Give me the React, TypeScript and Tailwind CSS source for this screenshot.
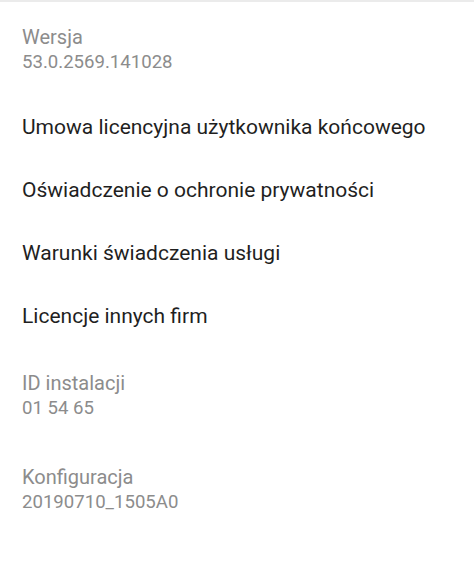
export default function App() {
  return (
    <div className="min-h-[562px] w-full bg-white font-['Roboto',sans-serif] border-t-2 border-[#ebebeb]">
      <InfoBlock label="Wersja" value="53.0.2569.141028" />
      <LinkRow text="Umowa licencyjna użytkownika końcowego" />
      <LinkRow text="Oświadczenie o ochronie prywatności" />
      <LinkRow text="Warunki świadczenia usługi" />
      <LinkRow text="Licencje innych firm" />
      <InfoBlock label="ID instalacji" value="01 54 65" />
      <InfoBlock label="Konfiguracja" value="20190710_1505A0" />
    </div>
  );
}

function InfoBlock({ label, value }: { label: string; value: string }) {
  return (
    <div className="px-[22px] pt-[23px] pb-[21px] text-[#8c8c8c]">
      <div className="text-[20px] leading-[25px]">{label}</div>
      <div className="text-[18.6px] leading-[25px]">{value}</div>
    </div>
  );
}

function LinkRow({ text }: { text: string }) {
  return (
    <div className="px-[22px] text-[21px] leading-[63px] text-[#1f1f1f]">{text}</div>
  );
}
